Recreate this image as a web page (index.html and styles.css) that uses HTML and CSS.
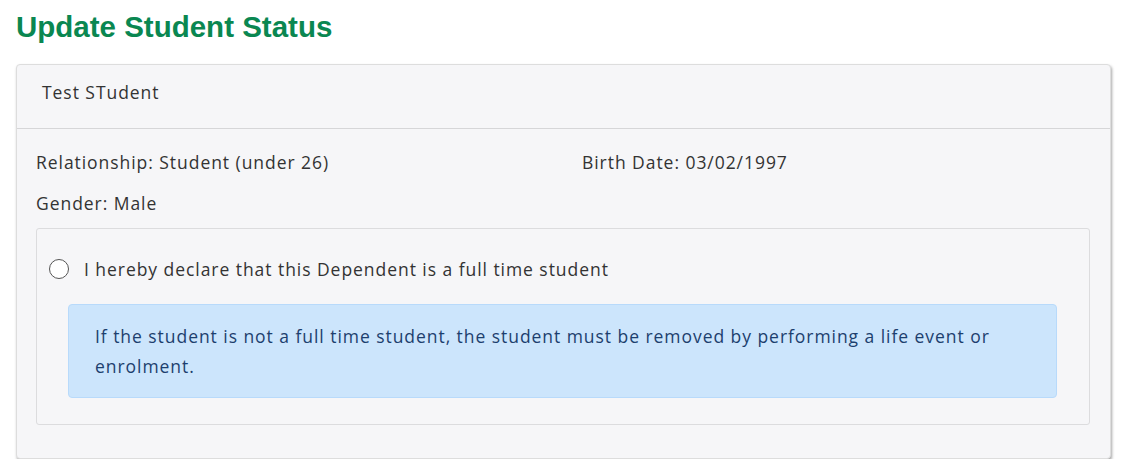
FILE: index.html
```html
<!DOCTYPE html>
<html lang="en">
<head>
    <meta charset="UTF-8">
    <meta name="viewport" content="width=device-width, initial-scale=1.0">
    <title>Update Student Status</title>
    <link rel="stylesheet" href="styles.css">
</head>
<body>

    <h1 class="page-title">Update Student Status</h1>

    <div class="card">
        <div class="card-header">Test STudent</div>
        <div class="card-body">
            <div class="details">
                <div class="detail">Relationship: Student (under 26)</div>
                <div class="detail">Birth Date: 03/02/1997</div>
                <div class="detail">Gender: Male</div>
            </div>

            <div class="declare">
                <label class="radio-row">
                    <input type="radio" class="radio" name="declare">
                    <span>I hereby declare that this Dependent is a full time student</span>
                </label>
                <div class="alert">
                    If the student is not a full time student, the student must be removed by performing a life event or enrolment.
                </div>
            </div>
        </div>
    </div>

</body>
</html>
```

FILE: styles.css
```css
body {
    margin: 0;
    padding: 0 11px 0 16px;
    font-family: "Open Sans", sans-serif;
    font-size: 17.5px;
    letter-spacing: 0.95px;
    color: #333;
    background-color: #fff;
}

.page-title {
    margin: 0;
    padding-top: 10px;
    height: 64px;
    box-sizing: border-box;
    font-family: "Liberation Sans", Arial, sans-serif;
    font-size: 29.5px;
    font-weight: bold;
    letter-spacing: 0;
    color: #0a8751;
}

.card {
    background-color: #f6f6f8;
    border: 1px solid #ddd;
    border-radius: 4px;
    box-shadow: 1px 2px 3px rgba(0, 0, 0, 0.35);
}

.card-header {
    height: 64px;
    padding: 0 25px 10px;
    display: flex;
    align-items: center;
    border-bottom: 1px solid #d6d6d8;
    box-sizing: border-box;
}

.card-body {
    padding: 21px 20px 33px 19px;
}

.details {
    display: grid;
    grid-template-columns: 546px 1fr;
    row-gap: 17px;
    line-height: 24px;
}

.declare {
    margin-top: 13px;
    border: 1px solid #dcdcde;
    border-radius: 3px;
    padding: 28px 32px 26px 12px;
}

.radio-row {
    display: flex;
    align-items: center;
    gap: 15px;
    line-height: 24px;
}

.radio {
    margin: 0;
    width: 20px;
    height: 20px;
    appearance: none;
    border: 1.5px solid #555;
    border-radius: 50%;
    background: #fff;
    box-sizing: border-box;
}

.alert {
    margin: 23px 0 0 19px;
    background-color: #cce5fc;
    border: 1px solid #b8dafb;
    border-radius: 4px;
    padding: 16px 26px;
    line-height: 30px;
    color: #1d3f6e;
}
```
